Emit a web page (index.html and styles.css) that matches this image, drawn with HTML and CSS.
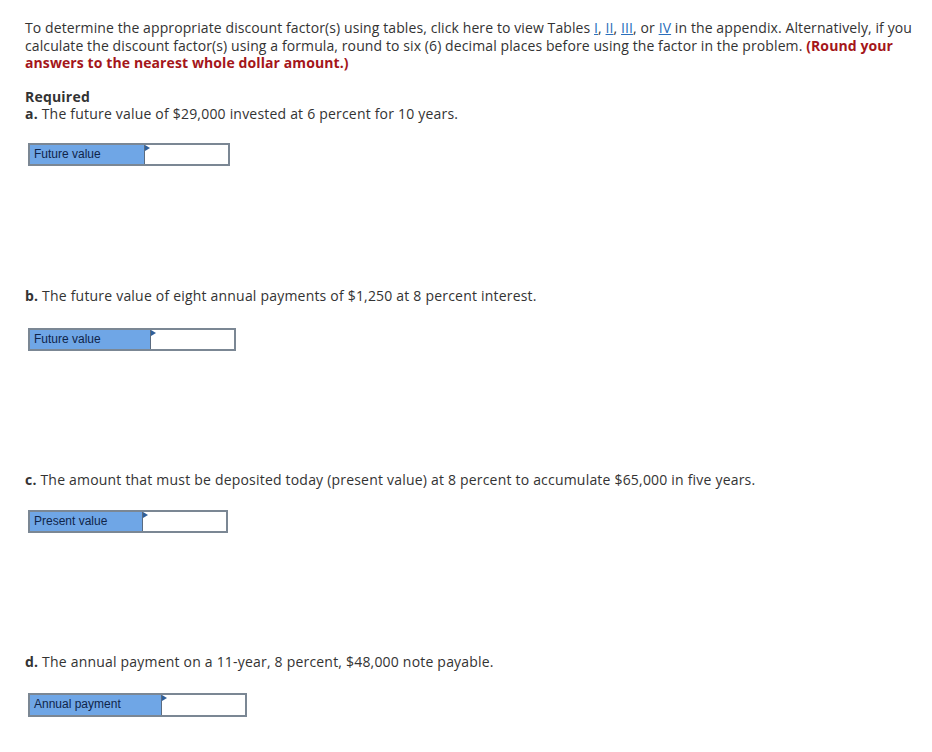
FILE: index.html
```html
<!DOCTYPE html>
<html>
<head>
<meta charset="utf-8">
<link rel="stylesheet" href="styles.css">
</head>
<body>
<div class="page">
  <p class="intro">To determine the appropriate discount factor(s) using tables, click here to view Tables <a class="tl">I</a>, <a class="tl">II</a>, <a class="tl">III</a>, or <a class="tl">IV</a> in the appendix. Alternatively, if you calculate the discount factor(s) using a formula, round to six (6) decimal places before using the factor in the problem. <strong class="red">(Round your answers to the nearest whole dollar amount.)</strong></p>

  <div class="req">Required</div>

  <section class="q q-a">
    <p class="qtext"><b>a.</b> The future value of $29,000 invested at 6 percent for 10 years.</p>
    <div class="ans"><span class="lbl lbl-a">Future value</span><span class="inp"></span></div>
  </section>

  <section class="q q-b">
    <p class="qtext"><b>b.</b> The future value of eight annual payments of $1,250 at 8 percent interest.</p>
    <div class="ans"><span class="lbl lbl-b">Future value</span><span class="inp"></span></div>
  </section>

  <section class="q q-c">
    <p class="qtext"><b>c.</b> The amount that must be deposited today (present value) at 8 percent to accumulate $65,000 in five years.</p>
    <div class="ans"><span class="lbl lbl-c">Present value</span><span class="inp"></span></div>
  </section>

  <section class="q q-d">
    <p class="qtext"><b>d.</b> The annual payment on a 11-year, 8 percent, $48,000 note payable.</p>
    <div class="ans"><span class="lbl lbl-d">Annual payment</span><span class="inp"></span></div>
  </section>
</div>
</body>
</html>
```

FILE: styles.css
```css
html, body {
  margin: 0;
  padding: 0;
  background: #ffffff;
}
.page {
  padding: 19px 0 0 25px;
  font-family: "Open Sans", "Lato", sans-serif;
  font-size: 14px;
  letter-spacing: 0.2px;
  color: #333333;
}
.intro {
  margin: 0;
  line-height: 17.5px;
  letter-spacing: 0.1px;
  padding-right: 4px;
}
.tl {
  color: #2a6ebb;
  text-decoration: underline;
}
.red {
  color: #a4161a;
  font-weight: 700;
}
.req {
  margin-top: 16px;
  font-weight: 700;
  line-height: 17px;
}
.q-a { height: 182px; }
.q-b { height: 184px; }
.q-c { height: 182px; }
.qtext {
  margin: 0;
  line-height: 17px;
}
.qtext b {
  font-weight: 700;
}
.ans {
  margin-top: 21px;
  margin-left: 3px;
  display: flex;
  height: 19px;
  border: 2px solid #7b8794;
  width: max-content;
  letter-spacing: 0;
}
.q-b .ans { margin-top: 24px; }
.q-c .ans { margin-top: 22px; }
.q-d .ans { margin-top: 23px; height: 20px; }
.lbl {
  background: #6fa6e6;
  color: #10254a;
  font-family: "Liberation Sans", Arial, sans-serif;
  font-size: 12px;
  line-height: 19px;
  padding: 0 0 0 4px;
  border-right: 1px solid #5a6b80;
}
.lbl-a { width: 110px; }
.lbl-b { width: 116px; }
.lbl-c { width: 108px; }
.lbl-d { width: 127px; }
.inp {
  position: relative;
  width: 83px;
  background: #ffffff;
}
.inp::before {
  content: "";
  position: absolute;
  left: 0;
  top: 0;
  border-top: 3px solid transparent;
  border-bottom: 3px solid transparent;
  border-left: 5px solid #2f5f9a;
}
```
